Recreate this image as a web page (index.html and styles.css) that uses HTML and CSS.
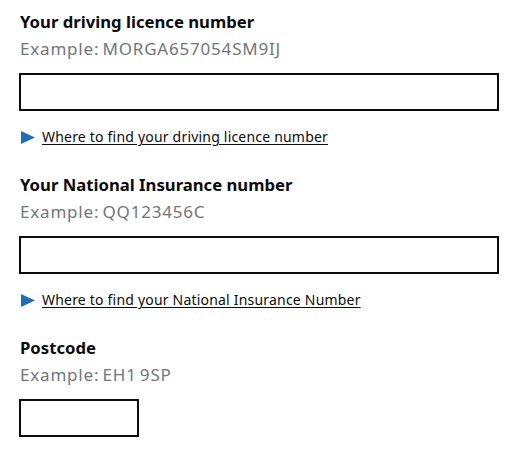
FILE: index.html
```html
<!DOCTYPE html>
<html lang="en">
<head>
<meta charset="utf-8">
<title>Form</title>
<link rel="stylesheet" href="styles.css">
</head>
<body>
<form class="form">
  <div class="group">
    <label class="label" for="dl">Your driving licence number</label>
    <div class="hint">Example: MORGA657054SM9IJ</div>
    <input class="input" id="dl" type="text">
    <details class="details">
      <summary class="summary"><svg class="arrow" width="14" height="13" viewBox="0 0 14 13"><polygon points="0,0 14,6.5 0,13" fill="#1d70b8"/></svg><span class="summary-text">Where to find your driving licence number</span></summary>
    </details>
  </div>
  <div class="group">
    <label class="label" for="ni">Your National Insurance number</label>
    <div class="hint">Example: QQ123456C</div>
    <input class="input" id="ni" type="text">
    <details class="details">
      <summary class="summary"><svg class="arrow" width="14" height="13" viewBox="0 0 14 13"><polygon points="0,0 14,6.5 0,13" fill="#1d70b8"/></svg><span class="summary-text">Where to find your National Insurance Number</span></summary>
    </details>
  </div>
  <div class="group">
    <label class="label" for="pc">Postcode</label>
    <div class="hint">Example: EH1 9SP</div>
    <input class="input input-short" id="pc" type="text">
  </div>
</form>
</body>
</html>
```

FILE: styles.css
```css
html, body {
  margin: 0;
  padding: 0;
  background: #ffffff;
}
body {
  font-family: "Noto Sans", "Liberation Sans", Arial, sans-serif;
  color: #0b0c0c;
}
.form {
  padding: 12px 19px 0 19px;
}
.group {
  display: flex;
  flex-direction: column;
  align-items: flex-start;
  margin-bottom: 28px;
}
.label {
  display: block;
  padding-left: 1px;
  font-size: 16.7px;
  font-weight: 700;
  line-height: 20px;
}
.hint {
  padding-left: 1px;
  margin-top: 7px;
  font-size: 17px;
  letter-spacing: 0.8px;
  word-spacing: -2px;
  line-height: 20px;
  color: #6f777b;
}
.input {
  box-sizing: border-box;
  width: 480px;
  height: 38px;
  margin: 14px 0 0 0;
  padding: 4px;
  border: 2px solid #0b0c0c;
  border-radius: 0;
  background: #fff;
  font: inherit;
  outline: none;
}
.input-short {
  width: 120px;
}
.details {
  margin-top: 16px;
}
.summary {
  display: flex;
  align-items: center;
  list-style: none;
  cursor: pointer;
  padding-left: 2px;
}
.summary::-webkit-details-marker {
  display: none;
}
.arrow {
  flex: none;
  margin-right: 7px;
}
.summary-text {
  font-size: 14px;
  letter-spacing: 0.2px;
  line-height: 20px;
  color: #0b0c0c;
  text-decoration: underline;
  text-underline-offset: 2px;
}
```
